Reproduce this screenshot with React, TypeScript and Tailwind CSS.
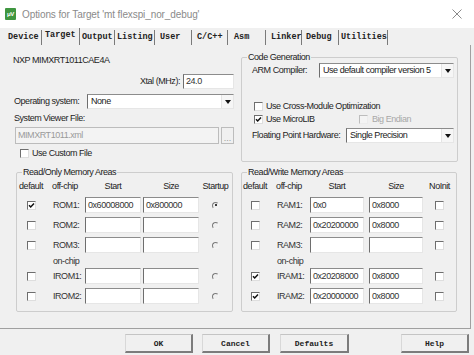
import React from "react";

// tab strip of the Keil dialog
const tabs = [
  { t: "Device", w: "w-[38px] pl-[4px]" },
  { t: "Target", w: "w-[38px] pl-[3px]", on: true },
  { t: "Output", w: "w-[35px] pl-[2px]" },
  { t: "Listing", w: "w-[40px] pl-[2px]" },
  { t: "User", w: "w-[37px] pl-[5px]" },
  { t: "C/C++", w: "w-[36px] pl-[5px]" },
  { t: "Asm", w: "w-[38px] pl-[6px]" },
  { t: "Linker", w: "w-[36px] pl-[5px]" },
  { t: "Debug", w: "w-[37px] pl-[4px]" },
  { t: "Utilities", w: "w-[49px] pl-[2px]" },
];

interface Cols {
  c1: string;
  c2: string;
  c3: string;
  c4: string;
  c5: string;
}

const roCols: Cols = {
  c1: "w-[28px]",
  c2: "w-[40px]",
  c3: "w-[56px]",
  c4: "w-[56px] ml-[2px]",
  c5: "w-[33px]",
};

const rwCols: Cols = {
  c1: "w-[26px]",
  c2: "w-[42px]",
  c3: "w-[54px]",
  c4: "w-[54px] ml-[5px]",
  c5: "w-[33px]",
};

interface MemRow {
  name: string;
  def: boolean;
  start: string;
  size: string;
  last: boolean;
}

const roRows: MemRow[] = [
  { name: "ROM1:", def: true, start: "0x60008000", size: "0x800000", last: true },
  { name: "ROM2:", def: false, start: "", size: "", last: false },
  { name: "ROM3:", def: false, start: "", size: "", last: false },
  { name: "IROM1:", def: false, start: "", size: "", last: false },
  { name: "IROM2:", def: false, start: "", size: "", last: false },
];

const rwRows: MemRow[] = [
  { name: "RAM1:", def: false, start: "0x0", size: "0x8000", last: false },
  { name: "RAM2:", def: false, start: "0x20200000", size: "0x8000", last: false },
  { name: "RAM3:", def: false, start: "", size: "", last: false },
  { name: "IRAM1:", def: true, start: "0x20208000", size: "0x8000", last: false },
  { name: "IRAM2:", def: true, start: "0x20000000", size: "0x8000", last: false },
];

function Check({ checked = false, disabled = false }: { checked?: boolean; disabled?: boolean }) {
  return (
    <span
      className={`relative inline-block w-[9px] h-[9px] shrink-0 border ${
        disabled
          ? "bg-[#f4f4f4] border-t-[#bdbdbd] border-l-[#bdbdbd] border-r-[#ececec] border-b-[#ececec]"
          : "bg-white border-t-[#6e6e6e] border-l-[#6e6e6e] border-r-[#dedede] border-b-[#dedede]"
      }`}
    >
      {checked && (
        <svg width="7" height="7" viewBox="0 0 7 7" className="absolute left-0 top-0">
          <path d="M1 3.2 L2.7 5 L6 1.5" stroke="#111" strokeWidth="1.5" fill="none" />
        </svg>
      )}
    </span>
  );
}

function Radio({ on }: { on: boolean }) {
  return (
    <span className="relative inline-flex items-center justify-center w-[7px] h-[7px] rounded-full border border-t-[#7a7a7a] border-l-[#7a7a7a] border-r-[#f4f4f4] border-b-[#f4f4f4]">
      {on && <span className="w-[2px] h-[2px] rounded-full bg-black" />}
    </span>
  );
}

function TextBox({ value, className = "" }: { value: string; className?: string }) {
  return (
    <div
      className={`h-full bg-white border border-t-[#8c8c8c] border-l-[#6e6e6e] border-r-[#e6e6e6] border-b-[#e6e6e6] pl-[2px] flex items-center text-[#333] ${className}`}
    >
      {value}
    </div>
  );
}

function Select({ value, className = "" }: { value: string; className?: string }) {
  return (
    <div
      className={`h-full bg-white border border-t-[#8c8c8c] border-l-[#6e6e6e] border-r-[#e6e6e6] border-b-[#e6e6e6] pl-[3px] flex items-center text-[#222] ${className}`}
    >
      <span>{value}</span>
      <span className="ml-auto w-[12px] h-full flex items-center justify-center border-l border-[#e4e4e4] bg-[#f6f6f6]">
        <svg width="6" height="4" viewBox="0 0 6 4">
          <path d="M0 0 H6 L3 4 Z" fill="#111" />
        </svg>
      </span>
    </div>
  );
}

function MemHeader({ cols, lastLabel }: { cols: Cols; lastLabel: string }) {
  return (
    <div className="flex h-[12px] mt-[2px] items-center text-[#222]">
      <div className={`${cols.c1} text-center`}>default</div>
      <div className={`${cols.c2} text-center`}>off-chip</div>
      <div className={`${cols.c3} text-center`}>Start</div>
      <div className={`${cols.c4} text-center`}>Size</div>
      <div className={`${cols.c5} text-center`}>{lastLabel}</div>
    </div>
  );
}

function MemLine({ row, cols, mt, pad, radio }: { row: MemRow; cols: Cols; mt: string; pad: string; radio: boolean }) {
  return (
    <div className={`flex h-[16px] items-center ${mt}`}>
      <div className={`${cols.c1} flex justify-center`}>
        <Check checked={row.def} />
      </div>
      <div className={`${cols.c2} ${pad} text-[#333]`}>{row.name}</div>
      <TextBox value={row.start} className={cols.c3} />
      <TextBox value={row.size} className={cols.c4} />
      <div className={`${cols.c5} flex justify-center`}>
        {radio ? <Radio on={row.last} /> : <Check checked={row.last} />}
      </div>
    </div>
  );
}

function MemGroup({ title, rows, cols, lastLabel, pad, radio, className }: {
  title: string;
  rows: MemRow[];
  cols: Cols;
  lastLabel: string;
  pad: string;
  radio: boolean;
  className: string;
}) {
  return (
    <fieldset className={`h-[145px] border border-[#cdcdcd] rounded-[2px] ${className}`}>
      <legend className="ml-[5px] px-[1px] leading-[11px] text-[#222]">{title}</legend>
      <MemHeader cols={cols} lastLabel={lastLabel} />
      <MemLine row={rows[0]} cols={cols} mt="mt-[5px]" pad={pad} radio={radio} />
      <MemLine row={rows[1]} cols={cols} mt="mt-[4px]" pad={pad} radio={radio} />
      <MemLine row={rows[2]} cols={cols} mt="mt-[4px]" pad={pad} radio={radio} />
      <div className={`h-[11px] mt-[3px] flex items-center text-[#333] ${cols.c1 === "w-[28px]" ? "pl-[36px]" : "pl-[35px]"}`}>
        on-chip
      </div>
      <MemLine row={rows[3]} cols={cols} mt="mt-[1px]" pad={pad} radio={radio} />
      <MemLine row={rows[4]} cols={cols} mt="mt-[4px]" pad={pad} radio={radio} />
    </fieldset>
  );
}

function DlgButton({ label, className }: { label: string; className: string }) {
  return (
    <div
      className={`w-[68px] h-[19px] flex items-center justify-center bg-[#f0f0f0] border border-t-[#c4c4c4] border-l-[#d8d8d8] border-r-2 border-b-2 border-r-[#7c7c7c] border-b-[#7c7c7c] font-['Liberation_Mono',monospace] font-bold text-[8px] tracking-normal text-[#222] ${className}`}
    >
      {label}
    </div>
  );
}

export default function App() {
  return (
    <div className="w-[474px] h-[355px] overflow-hidden bg-[#f0f0f0] text-[#1e1e1e] font-['Liberation_Sans',Arial,sans-serif] text-[9px] tracking-[-0.45px] leading-[11px]">
      {/* title bar */}
      <div className="h-[28px] bg-white flex items-center">
        <svg width="11" height="12" viewBox="0 0 11 12" className="ml-[5px]">
          <rect x="0" y="0" width="11" height="12" rx="1" fill="#3f9640" />
          <text x="5.5" y="8" fontSize="6" fontWeight="bold" fill="#fff" textAnchor="middle" fontFamily="Liberation Sans, sans-serif">
            μV
          </text>
        </svg>
        <span className="ml-[6px] text-[10px] tracking-[-0.1px] text-[#8a8a8a]">
          Options for Target 'mt flexspi_nor_debug'
        </span>
        <svg width="10" height="10" viewBox="0 0 10 10" className="ml-auto mr-[12px]">
          <path d="M0.5 0.5 L9.5 9.5 M9.5 0.5 L0.5 9.5" stroke="#8a8a8a" strokeWidth="1" />
        </svg>
      </div>

      {/* tabs */}
      <div className="h-[17px] flex items-end pl-[4px] font-['Liberation_Mono',monospace] font-bold text-[8.5px] tracking-normal text-[#222]">
        {tabs.map((tab) =>
          tab.on ? (
            <div key={tab.t} className={`${tab.w} h-[17px] leading-[14px] border-r border-[#7a7a7a]`}>
              {tab.t}
            </div>
          ) : (
            <div key={tab.t} className={`${tab.w} h-[15px] leading-[14px] border-r border-[#7a7a7a]`}>
              {tab.t}
            </div>
          )
        )}
      </div>

      {/* tab page */}
      <div className="w-[471px] h-[284px] border-r border-b border-[#a0a0a0]">
        <div className="h-[122px] flex">
          {/* device / os column */}
          <div className="w-[221px] ml-[13px] flex flex-col">
            <div className="mt-[10px] h-[11px]">NXP MIMXRT1011CAE4A</div>
            <div className="mt-[8px] h-[15px] flex items-center justify-end">
              <span>Xtal (MHz):</span>
              <TextBox value="24.0" className="w-[51px] ml-[3px]" />
            </div>
            <div className="mt-[5px] h-[15px] flex items-center">
              <span className="w-[74px] pl-[1px]">Operating system:</span>
              <Select value="None" className="flex-1" />
            </div>
            <div className="mt-[3px] h-[12px] pl-[1px] flex items-center">System Viewer File:</div>
            <div className="mt-[3px] h-[17px] flex items-center">
              <div className="ml-[2px] flex-1 h-full bg-[#f3f3f3] border border-[#bcbcbc] pl-[2px] flex items-center text-[#9a9a9a]">
                MIMXRT1011.xml
              </div>
              <div className="ml-[2px] w-[13px] h-full border border-[#bcbcbc] bg-[#f0f0f0] flex items-end justify-center text-[#9a9a9a] leading-[10px] tracking-normal">
                ...
              </div>
            </div>
            <div className="mt-[5px] h-[9px] flex items-center pl-[7px]">
              <Check />
              <span className="ml-[3px]">Use Custom File</span>
            </div>
          </div>

          {/* code generation */}
          <fieldset className="ml-[7px] mt-[7px] w-[217px] h-[110px] border border-[#cdcdcd] rounded-[2px] pl-[10px] pr-[3px]">
            <legend className="ml-[-5px] px-[1px] leading-[11px] text-[#222]">Code Generation</legend>
            <div className="h-[15px] flex items-center">
              <span className="w-[67px]">ARM Compiler:</span>
              <Select value="Use default compiler version 5" className="flex-1" />
            </div>
            <div className="mt-[24px] h-[9px] flex items-center pl-[2px]">
              <Check />
              <span className="ml-[3px]">Use Cross-Module Optimization</span>
            </div>
            <div className="mt-[4px] h-[9px] flex items-center pl-[2px]">
              <Check checked />
              <span className="ml-[3px] w-[93px]">Use MicroLIB</span>
              <Check disabled />
              <span className="ml-[4px] text-[#a8a8a8]">Big Endian</span>
            </div>
            <div className="mt-[4px] h-[15px] flex items-center">
              <span className="w-[94px]">Floating Point Hardware:</span>
              <Select value="Single Precision" className="flex-1" />
            </div>
          </fieldset>
        </div>

        {/* memory areas */}
        <div className="flex pl-[16px]">
          <MemGroup
            title="Read/Only Memory Areas"
            rows={roRows}
            cols={roCols}
            lastLabel="Startup"
            pad="pl-[8px]"
            radio
            className="w-[217px]"
          />
          <MemGroup
            title="Read/Write Memory Areas"
            rows={rwRows}
            cols={rwCols}
            lastLabel="NoInit"
            pad="pl-[9px]"
            radio={false}
            className="w-[216px] ml-[8px]"
          />
        </div>
      </div>

      {/* dialog buttons */}
      <div className="flex pt-[5px]">
        <DlgButton label="OK" className="ml-[125px]" />
        <DlgButton label="Cancel" className="ml-[9px]" />
        <DlgButton label="Defaults" className="ml-[10px] w-[69px]" />
        <DlgButton label="Help" className="ml-[52px]" />
      </div>
    </div>
  );
}
